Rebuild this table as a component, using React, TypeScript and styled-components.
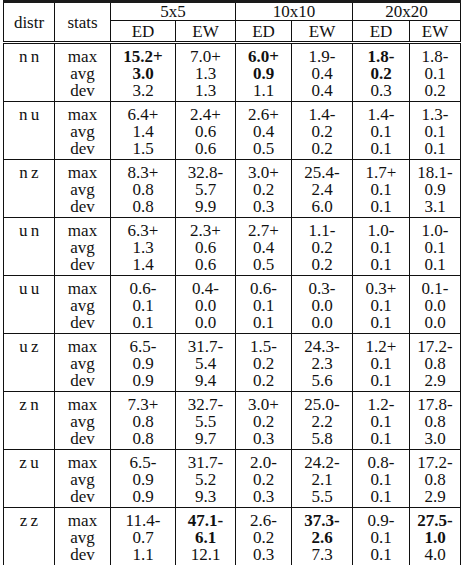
import React from 'react'
import styled, { createGlobalStyle } from 'styled-components'

const GlobalStyle = createGlobalStyle`
  body {
    margin: 0;
    background: #fff;
    color: #111;
    font-family: 'Liberation Serif', 'Times New Roman', serif;
  }
`

const Page = styled.div`
  padding: 0 0 0 3px;
`

const Table = styled.table`
  border-collapse: collapse;
  table-layout: fixed;
  width: 457px;
  font-size: 17px;
  line-height: 17px;
  border-top: 3px solid #1a1a1a;
  border-left: 1px solid #111;
  border-right: 1px solid #111;
  border-bottom: 1px solid #111;
`

const HeadCell = styled.th<{ $tall?: boolean; $double?: boolean }>`
  font-weight: normal;
  text-align: center;
  vertical-align: middle;
  padding: 0;
  height: ${(p) => (p.$tall ? '20px' : '16px')};
  border: 1px solid #111;
  border-bottom: ${(p) => (p.$double ? '3px double #111' : '1px solid #111')};
`

const DistrCell = styled.td`
  text-align: center;
  vertical-align: top;
  padding: 4px 0 0;
  border: 1px solid #111;
  word-spacing: -1px;
`

type Pos = 'first' | 'mid' | 'last'

const Cell = styled.td<{ $pos: Pos; $bold?: boolean }>`
  text-align: center;
  padding: ${(p) => (p.$pos === 'first' ? '4px 0 0' : p.$pos === 'last' ? '0 0 2px' : '0')};
  font-weight: ${(p) => (p.$bold ? 'bold' : 'normal')};
  border-left: 1px solid #111;
  border-right: 1px solid #111;
  border-top: ${(p) => (p.$pos === 'first' ? '1px solid #111' : 'none')};
  white-space: nowrap;
`

type Group = { name: string; cols: string[][]; bold?: number[] }

// 6 columns: 5x5 ED, 5x5 EW, 10x10 ED, 10x10 EW, 20x20 ED, 20x20 EW
const groups: Group[] = [
  { name: 'n n', cols: [['15.2+', '3.0', '3.2'], ['7.0+', '1.3', '1.3'], ['6.0+', '0.9', '1.1'], ['1.9-', '0.4', '0.4'], ['1.8-', '0.2', '0.3'], ['1.8-', '0.1', '0.2']], bold: [0, 2, 4] },
  { name: 'n u', cols: [['6.4+', '1.4', '1.5'], ['2.4+', '0.6', '0.6'], ['2.6+', '0.4', '0.5'], ['1.4-', '0.2', '0.2'], ['1.4-', '0.1', '0.1'], ['1.3-', '0.1', '0.1']] },
  { name: 'n z', cols: [['8.3+', '0.8', '0.8'], ['32.8-', '5.7', '9.9'], ['3.0+', '0.2', '0.3'], ['25.4-', '2.4', '6.0'], ['1.7+', '0.1', '0.1'], ['18.1-', '0.9', '3.1']] },
  { name: 'u n', cols: [['6.3+', '1.3', '1.4'], ['2.3+', '0.6', '0.6'], ['2.7+', '0.4', '0.5'], ['1.1-', '0.2', '0.2'], ['1.0-', '0.1', '0.1'], ['1.0-', '0.1', '0.1']] },
  { name: 'u u', cols: [['0.6-', '0.1', '0.1'], ['0.4-', '0.0', '0.0'], ['0.6-', '0.1', '0.1'], ['0.3-', '0.0', '0.0'], ['0.3+', '0.1', '0.1'], ['0.1-', '0.0', '0.0']] },
  { name: 'u z', cols: [['6.5-', '0.9', '0.9'], ['31.7-', '5.4', '9.4'], ['1.5-', '0.2', '0.2'], ['24.3-', '2.3', '5.6'], ['1.2+', '0.1', '0.1'], ['17.2-', '0.8', '2.9']] },
  { name: 'z n', cols: [['7.3+', '0.8', '0.8'], ['32.7-', '5.5', '9.7'], ['3.0+', '0.2', '0.3'], ['25.0-', '2.2', '5.8'], ['1.2-', '0.1', '0.1'], ['17.8-', '0.8', '3.0']] },
  { name: 'z u', cols: [['6.5-', '0.9', '0.9'], ['31.7-', '5.2', '9.3'], ['2.0-', '0.2', '0.3'], ['24.2-', '2.1', '5.5'], ['0.8-', '0.1', '0.1'], ['17.2-', '0.8', '2.9']] },
  { name: 'z z', cols: [['11.4-', '0.7', '1.1'], ['47.1-', '6.1', '12.1'], ['2.6-', '0.2', '0.3'], ['37.3-', '2.6', '7.3'], ['0.9-', '0.1', '0.1'], ['27.5-', '1.0', '4.0']], bold: [1, 3, 5] },
]

const stats = ['max', 'avg', 'dev']
const positions: Pos[] = ['first', 'mid', 'last']
const widths = [51, 56, 65, 60, 56, 61, 57, 51]

const App = () => (
  <Page>
    <GlobalStyle />
    <Table>
      <colgroup>
        {widths.map((w, i) => (
          <col key={i} style={{ width: w }} />
        ))}
      </colgroup>
      <thead>
        <tr>
          <HeadCell rowSpan={2} $double>distr</HeadCell>
          <HeadCell rowSpan={2} $double>stats</HeadCell>
          <HeadCell colSpan={2}>5x5</HeadCell>
          <HeadCell colSpan={2}>10x10</HeadCell>
          <HeadCell colSpan={2}>20x20</HeadCell>
        </tr>
        <tr>
          {['ED', 'EW', 'ED', 'EW', 'ED', 'EW'].map((h, i) => (
            <HeadCell key={i} $tall $double>
              {h}
            </HeadCell>
          ))}
        </tr>
      </thead>
      <tbody>
        {groups.map((g) =>
          stats.map((s, r) => (
            <tr key={g.name + s}>
              {r === 0 && <DistrCell rowSpan={3}>{g.name}</DistrCell>}
              <Cell $pos={positions[r]}>{s}</Cell>
              {g.cols.map((c, ci) => (
                <Cell key={ci} $pos={positions[r]} $bold={!!g.bold?.includes(ci) && r < 2}>
                  {c[r]}
                </Cell>
              ))}
            </tr>
          ))
        )}
      </tbody>
    </Table>
  </Page>
)

export default App
